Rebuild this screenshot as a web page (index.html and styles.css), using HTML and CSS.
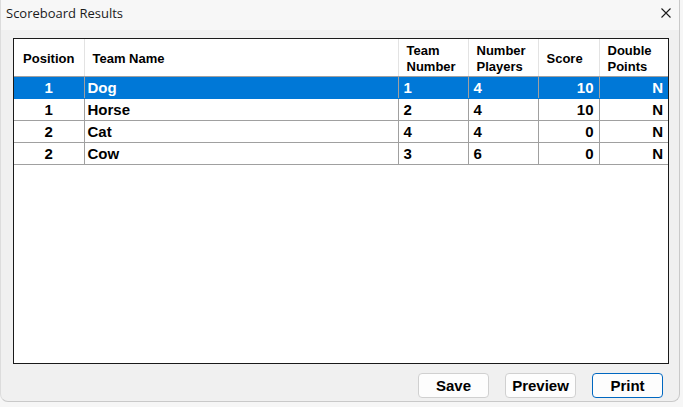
FILE: index.html
```html
<!DOCTYPE html>
<html>
<head>
<meta charset="utf-8">
<link rel="stylesheet" href="styles.css">
</head>
<body>
<div class="window">
  <div class="titlebar">
    <span class="title">Scoreboard Results</span>
    <svg class="close" width="10" height="10" viewBox="0 0 10 10"><path d="M0.5 0.5 L9.5 9.5 M9.5 0.5 L0.5 9.5" stroke="#1b1b1b" stroke-width="1.1" fill="none"/></svg>
  </div>
  <div class="content">
    <div class="grid">
      <table>
        <colgroup>
          <col class="c1"><col class="c2"><col class="c3"><col class="c4"><col class="c5"><col class="c6">
        </colgroup>
        <thead>
          <tr>
            <th class="center">Position</th>
            <th>Team Name</th>
            <th>Team<br>Number</th>
            <th>Number<br>Players</th>
            <th>Score</th>
            <th>Double<br>Points</th>
          </tr>
        </thead>
        <tbody>
          <tr class="sel"><td class="center">1</td><td>Dog</td><td>1</td><td>4</td><td class="right">10</td><td class="right">N</td></tr>
          <tr><td class="center">1</td><td>Horse</td><td>2</td><td>4</td><td class="right">10</td><td class="right">N</td></tr>
          <tr><td class="center">2</td><td>Cat</td><td>4</td><td>4</td><td class="right">0</td><td class="right">N</td></tr>
          <tr><td class="center">2</td><td>Cow</td><td>3</td><td>6</td><td class="right">0</td><td class="right">N</td></tr>
        </tbody>
      </table>
    </div>
    <div class="buttons">
      <button class="btn">Save</button>
      <button class="btn">Preview</button>
      <button class="btn primary">Print</button>
    </div>
  </div>
</div>
</body>
</html>
```
FILE: styles.css
```css
html, body {
  margin: 0;
  padding: 0;
  background: #f6f6f6;
  width: 683px;
  height: 407px;
  overflow: hidden;
}
.window {
  width: 680px;
  height: 402px;
  box-sizing: border-box;
  border-right: 1px solid #c9c9c9;
  border-bottom: 1px solid #c9c9c9;
  border-left: 1px solid #dcdcdc;
  border-radius: 0 0 8px 8px;
  background: #f0f0f0;
  display: flex;
  flex-direction: column;
  overflow: hidden;
}
.titlebar {
  height: 30px;
  flex: none;
  background: #f7f7f7;
  display: flex;
  align-items: center;
  justify-content: space-between;
  padding: 0 8px 0 5px;
}
.title {
  font-family: "Open Sans", "Noto Sans", sans-serif;
  font-size: 13px;
  color: #1b1b1b;
  margin-top: -4px;
}
.close {
  margin-top: -4px;
}
.content {
  padding: 8px 10px 0 12px;
}
.grid {
  width: 656px;
  height: 326px;
  box-sizing: border-box;
  border: 1px solid #1a1a1a;
  background: #fff;
  overflow: hidden;
}
table {
  border-collapse: collapse;
  table-layout: fixed;
  width: 654px;
  font-family: "Liberation Sans", Arial, sans-serif;
  font-weight: bold;
  color: #000;
}
.c1 { width: 70px; }
.c2 { width: 314px; }
.c3 { width: 70px; }
.c4 { width: 70px; }
.c5 { width: 61px; }
.c6 { width: 69px; }
th {
  height: 37px;
  box-sizing: border-box;
  padding: 3px 0 0 8px;
  text-align: left;
  font-size: 13px;
  line-height: 16px;
  border-right: 1px solid #e3e3e3;
  border-bottom: 1px solid #a0a0a0;
  font-weight: bold;
}
th:last-child { border-right: none; }
th.center { text-align: center; padding: 3px 0 0 0; }
td {
  height: 22px;
  box-sizing: border-box;
  padding: 1px 5px 0 5px;
  font-size: 15px;
  line-height: 18px;
  border-right: 1px solid #a0a0a0;
  border-bottom: 1px solid #a0a0a0;
  white-space: nowrap;
}
td:nth-child(2) { padding-left: 3px; }
td:last-child { border-right: none; }
td.center { text-align: center; }
td.right { text-align: right; }
tr.sel td {
  background: #0078d7;
  color: #fff;
  border-bottom-color: #0078d7;
}
.buttons {
  display: flex;
  justify-content: flex-end;
  gap: 16px;
  margin-top: 9px;
  padding-right: 6px;
}
.btn {
  width: 71px;
  height: 25px;
  box-sizing: border-box;
  border: 1px solid #d0d0d0;
  border-radius: 4px;
  background: #fdfdfd;
  font-family: "Liberation Sans", Arial, sans-serif;
  font-size: 15px;
  font-weight: bold;
  color: #000;
  padding: 0;
}
.btn.primary {
  border-color: #0067c0;
}
```
